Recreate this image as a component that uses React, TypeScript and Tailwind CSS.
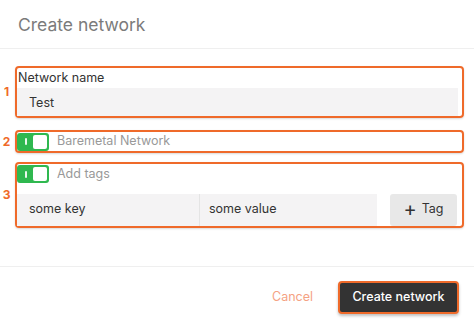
const font = { fontFamily: "Inter, 'Noto Sans', sans-serif" };

function Toggle() {
  return (
    <div className="w-[32px] h-[18px] rounded-[3px] bg-[#2fb84f] p-[2px] flex items-center">
      <div className="w-[14px] flex justify-center">
        <div className="w-[2px] h-[7px] bg-white/90 rounded-full"></div>
      </div>
      <div className="flex-1 h-full bg-white rounded-[2px]"></div>
    </div>
  );
}

function Marker({ n }: { n: string }) {
  return (
    <div className="w-[15px] flex justify-center pr-[2px] text-[12px] font-bold text-[#ef6a2a]">
      {n}
    </div>
  );
}

export default function App() {
  return (
    <div className="w-[474px] h-[327px] bg-white flex flex-col" style={font}>
      {/* header */}
      <div className="h-[49px] border-b border-[#efefef] flex items-center px-[18px] pt-[3px]">
        <h1 className="text-[17.5px] text-[#7b7b7b]">Create network</h1>
      </div>

      {/* body */}
      <div className="flex-1 flex flex-col pt-[17px] pr-[10px]">
        <div className="flex items-center">
          <Marker n="1" />
          <div className="flex-1 h-[52px] border-2 border-[#ef6a2a] rounded-[4px] pr-[4px] flex flex-col shadow-[0_1px_2px_rgba(0,0,0,0.15)]">
            <div className="h-[20px] flex items-center text-[12.5px] text-[#333] pl-[1px]">Network name</div>
            <div className="h-[28px] bg-[#f4f3f4] flex items-center pl-[12px] pt-[3px] text-[12.5px] text-[#333]">Test</div>
          </div>
        </div>

        <div className="flex items-center mt-[12px]">
          <Marker n="2" />
          <div className="flex-1 h-[23px] border-2 border-[#ef6a2a] rounded-[4px] flex items-center shadow-[0_1px_2px_rgba(0,0,0,0.15)]">
            <Toggle />
            <span className="ml-[8px] text-[12.5px] text-[#999]">Baremetal Network</span>
          </div>
        </div>

        <div className="flex items-center mt-[9px]">
          <Marker n="3" />
          <div className="flex-1 h-[66px] border-2 border-[#ef6a2a] rounded-[4px] pr-[5px] flex flex-col shadow-[0_1px_2px_rgba(0,0,0,0.15)]">
            <div className="flex items-center mt-[1px]">
              <Toggle />
              <span className="ml-[8px] text-[12.5px] text-[#999]">Add tags</span>
            </div>
            <div className="flex items-center mt-[10px] h-[32px]">
              <div className="w-[183px] h-full bg-[#f4f3f4] flex items-center pl-[12px] text-[12.5px] text-[#333] border-r border-[#e4e4e4]">
                some key
              </div>
              <div className="w-[177px] h-full bg-[#f4f3f4] flex items-center pl-[9px] text-[12.5px] text-[#333]">
                some value
              </div>
              <button className="ml-auto w-[67px] h-full bg-[#e8e8e8] rounded-[3px] flex items-center justify-center gap-[5px] text-[12.5px] text-[#333]">
                <span className="text-[20px] leading-none -mt-[2px]">+</span>
                <span>Tag</span>
              </button>
            </div>
          </div>
        </div>
      </div>

      {/* footer */}
      <div className="h-[61px] border-t border-[#efefef] flex items-center justify-end pr-[15px]">
        <span className="text-[12.5px] text-[#f5a283] mr-[25px]">Cancel</span>
        <button className="w-[121px] h-[33px] bg-[#333333] border-2 border-[#ef6a2a] rounded-[4px] text-white text-[12.5px] font-medium shadow-[0_2px_3px_rgba(0,0,0,0.25)]">
          Create network
        </button>
      </div>
    </div>
  );
}
